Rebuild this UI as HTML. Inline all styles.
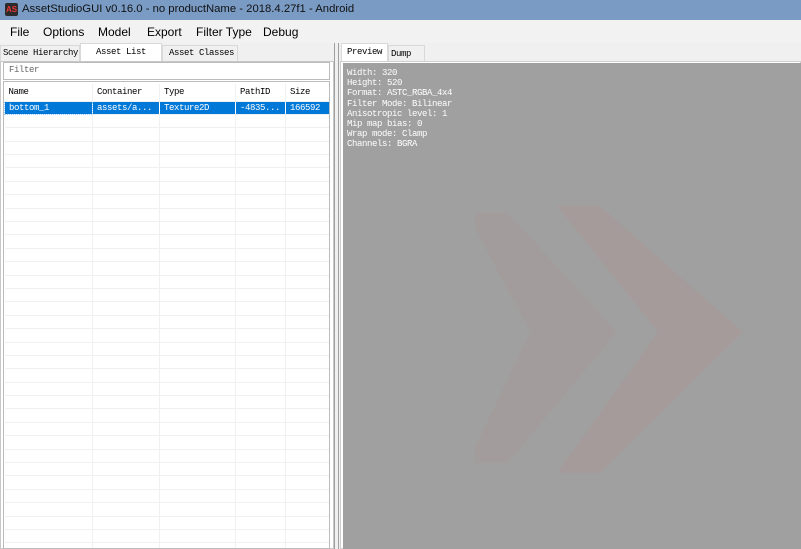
<!DOCTYPE html>
<html style="overflow:hidden;width:801px;height:549px"><head><style>
*{margin:0;padding:0;box-sizing:border-box}
body{width:801px;height:549px;overflow:hidden;background:#f0f0f0;position:relative;font-family:"Liberation Sans",sans-serif}
.abs{position:absolute}
.mono{font-family:"Liberation Mono","Liberation Serif",monospace;font-size:9px;letter-spacing:-0.4px;color:#000;white-space:nowrap}
#title{left:0;top:0;width:801px;height:20px;background:#7a9bc4;color:#111;font-size:11.3px;line-height:19px}
#menu{left:0;top:20px;width:801px;height:23px;background:#f2f2f2;font-size:12px;line-height:24px;color:#000}
.grid td{border-right:1px solid #f0f0f0;border-bottom:1px solid #f0f0f0;height:13.4px;padding:0 0 0 4px;white-space:nowrap;overflow:hidden}
</style></head><body>
<div id="title" class="abs">
 <div class="abs" style="left:5px;top:3px;width:13px;height:13px;background:#2b2b2b;border-radius:2px;color:#e33;font-size:8px;font-weight:bold;line-height:13px;text-align:center">AS</div>
 <span class="abs" style="left:22px;top:0">AssetStudioGUI v0.16.0 - no productName - 2018.4.27f1 - Android</span>
</div>
<div id="menu" class="abs">
 <span class="abs" style="left:10px">File</span>
 <span class="abs" style="left:43px">Options</span>
 <span class="abs" style="left:98px">Model</span>
 <span class="abs" style="left:147px">Export</span>
 <span class="abs" style="left:196px">Filter Type</span>
 <span class="abs" style="left:263px">Debug</span>
</div>
<div class="abs mono" style="left:0;top:45px;width:80px;height:16px;border:1px solid #d9d9d9;border-bottom:none;background:#f0f0f0;line-height:15px;padding-left:2px">Scene Hierarchy</div>
<div class="abs mono" style="left:80px;top:43px;width:82px;height:19px;border:1px solid #d9d9d9;border-bottom:none;background:#fff;line-height:17px;padding-left:15px">Asset List</div>
<div class="abs mono" style="left:162px;top:45px;width:76px;height:16px;border:1px solid #d9d9d9;border-bottom:none;background:#f0f0f0;line-height:15px;padding-left:6px">Asset Classes</div>
<div class="abs" style="left:0;top:61px;width:334px;height:488px;background:#fff;border:1px solid #c8c8c8"></div>
<div class="abs mono" style="left:3px;top:62px;width:327px;height:18px;border:1px solid #bbb;background:#fff;color:#666;line-height:15px;padding-left:5px">Filter</div>
<div class="abs" style="left:3px;top:81px;width:327px;height:468px;background:#fff;border:1px solid #bbb;overflow:hidden">
<table class="grid mono" style="border-collapse:collapse;table-layout:fixed;width:325px;margin-top:2px">
<colgroup><col style="width:88px"><col style="width:67px"><col style="width:76px"><col style="width:50px"><col style="width:44px"></colgroup>
<tr style="height:17px"><td style="height:17px">Name</td><td>Container</td><td>Type</td><td>PathID</td><td>Size</td></tr>
<tr style="background:#0078d7;color:#fff"><td style="border:1px dotted #9cf">bottom_1</td><td style="border-right:1px solid #fff">assets/a...</td><td style="border-right:1px solid #fff">Texture2D</td><td style="border-right:1px solid #fff">-4835...</td><td>166592</td></tr>
<tr><td></td><td></td><td></td><td></td><td></td></tr><tr><td></td><td></td><td></td><td></td><td></td></tr><tr><td></td><td></td><td></td><td></td><td></td></tr><tr><td></td><td></td><td></td><td></td><td></td></tr><tr><td></td><td></td><td></td><td></td><td></td></tr><tr><td></td><td></td><td></td><td></td><td></td></tr><tr><td></td><td></td><td></td><td></td><td></td></tr><tr><td></td><td></td><td></td><td></td><td></td></tr><tr><td></td><td></td><td></td><td></td><td></td></tr><tr><td></td><td></td><td></td><td></td><td></td></tr><tr><td></td><td></td><td></td><td></td><td></td></tr><tr><td></td><td></td><td></td><td></td><td></td></tr><tr><td></td><td></td><td></td><td></td><td></td></tr><tr><td></td><td></td><td></td><td></td><td></td></tr><tr><td></td><td></td><td></td><td></td><td></td></tr><tr><td></td><td></td><td></td><td></td><td></td></tr><tr><td></td><td></td><td></td><td></td><td></td></tr><tr><td></td><td></td><td></td><td></td><td></td></tr><tr><td></td><td></td><td></td><td></td><td></td></tr><tr><td></td><td></td><td></td><td></td><td></td></tr><tr><td></td><td></td><td></td><td></td><td></td></tr><tr><td></td><td></td><td></td><td></td><td></td></tr><tr><td></td><td></td><td></td><td></td><td></td></tr><tr><td></td><td></td><td></td><td></td><td></td></tr><tr><td></td><td></td><td></td><td></td><td></td></tr><tr><td></td><td></td><td></td><td></td><td></td></tr><tr><td></td><td></td><td></td><td></td><td></td></tr><tr><td></td><td></td><td></td><td></td><td></td></tr><tr><td></td><td></td><td></td><td></td><td></td></tr><tr><td></td><td></td><td></td><td></td><td></td></tr><tr><td></td><td></td><td></td><td></td><td></td></tr><tr><td></td><td></td><td></td><td></td><td></td></tr><tr><td></td><td></td><td></td><td></td><td></td></tr>
</table></div>
<div class="abs" style="left:334px;top:43px;width:1px;height:506px;background:#a0a0a0"></div>
<div class="abs" style="left:338px;top:43px;width:1px;height:506px;background:#a0a0a0"></div>
<div class="abs mono" style="left:341px;top:43px;width:47px;height:19px;border:1px solid #d9d9d9;border-bottom:none;background:#fff;line-height:17px;padding-left:5px">Preview</div>
<div class="abs mono" style="left:388px;top:45px;width:37px;height:17px;border:1px solid #d9d9d9;border-bottom:none;background:#f0f0f0;line-height:16px;padding-left:2px">Dump</div>
<div class="abs" style="left:340px;top:61px;width:461px;height:488px;background:#fff;border:1px solid #d0d0d0"></div>
<div class="abs" style="left:343px;top:63px;width:458px;height:486px;background:#a0a0a0;overflow:hidden">
<svg class="abs" style="left:0;top:0" width="458" height="486">
<polygon points="132,150 165,150 274,269 165,400 132,400 132,385 187,269 132,165" fill="#a39c9c"/>
<polygon points="214,143 257,143 400,269 257,410 214,410 315,269" fill="#a59b9b"/>
</svg>
<div class="abs mono" style="left:4px;top:5px;color:#fff;line-height:10.2px;white-space:pre">Width: 320
Height: 520
Format: ASTC_RGBA_4x4
Filter Mode: Bilinear
Anisotropic level: 1
Mip map bias: 0
Wrap mode: Clamp
Channels: BGRA</div>
</div>
</body></html>
